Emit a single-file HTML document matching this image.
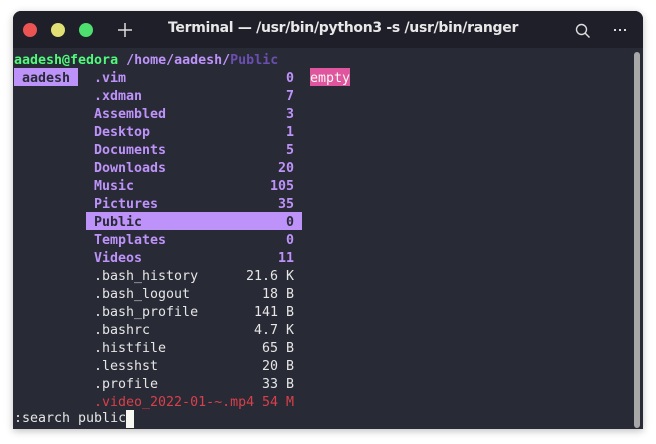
<!DOCTYPE html>
<html><head><meta charset="utf-8"><style>
html,body{margin:0;padding:0;width:656px;height:444px;background:#fff;overflow:hidden}
.win{position:absolute;left:13px;top:11px;width:630px;height:418px;background:#282a36;border-radius:8px 8px 0 0;overflow:hidden;box-shadow:0 2px 8px rgba(0,0,0,.25)}
.tb{position:absolute;left:0;top:0;width:630px;height:37px;background:#1e1f29}
.dot{position:absolute;top:12px;width:14px;height:14px;border-radius:50%}
.title{position:absolute;left:155px;width:350px;top:9px;text-align:center;color:#e8e8e8;font:bold 14px "DejaVu Sans","Liberation Sans",sans-serif;letter-spacing:-0.3px;white-space:nowrap}
.r{position:absolute;font:13.3px "DejaVu Sans Mono","Liberation Mono",monospace;line-height:18px;height:18px;white-space:pre;color:#e6e6e6;padding-top:2px;box-sizing:border-box}
.f{position:absolute;left:94px;width:200px;display:flex;justify-content:space-between;font:13.3px "DejaVu Sans Mono","Liberation Mono",monospace;line-height:18px;height:18px;white-space:pre;color:#e6e6e6;padding-top:2px;box-sizing:border-box}
.b{font-weight:bold}
.p{color:#bd93f9}
.sb{position:absolute;left:621px;top:41px;width:6px;height:376px;background:#a8a8a8;border-radius:3px}
</style></head><body>
<div class="win">
<div class="tb">
<div class="dot" style="left:10px;background:#ec5454"></div>
<div class="dot" style="left:38px;background:#e2df74"></div>
<div class="dot" style="left:66px;background:#4ee06e"></div>
<svg style="position:absolute;left:104px;top:11px" width="16" height="16"><path d="M8 1v14M1 8h14" stroke="#ddd" stroke-width="1.5"/></svg>
<div class="title">Terminal — /usr/bin/python3 -s /usr/bin/ranger</div>
<svg style="position:absolute;left:562px;top:12px" width="16" height="16"><circle cx="6.5" cy="6.5" r="5" fill="none" stroke="#ddd" stroke-width="1.4"/><path d="M10 10l4.5 4.5" stroke="#ddd" stroke-width="1.5"/></svg>
<div style="position:absolute;left:601px;top:18px;width:2px;height:2px;background:#ddd;box-shadow:5px 0 #ddd,10px 0 #ddd"></div>
</div>
<div class="sb"></div>
</div>
<div class="r b" style="left:14px;top:50px"><span style="color:#50fa7b">aadesh@fedora</span> <span class="p">/home/aadesh/</span><span style="color:#6b4fb0">Public</span></div>
<div class="r b" style="left:14px;top:68px;width:64px;background:#bd93f9;color:#282a36"> aadesh</div>
<div class="r" style="left:310px;top:68px;width:40px;background:#e0569e;color:#f8f8f2">empty</div>
<div class="r" style="left:86px;top:212px;width:216px;background:#bd93f9"></div>
<div class="f b p" style="top:68px"><span>.vim</span><span>0</span></div>
<div class="f b p" style="top:86px"><span>.xdman</span><span>7</span></div>
<div class="f b p" style="top:104px"><span>Assembled</span><span>3</span></div>
<div class="f b p" style="top:122px"><span>Desktop</span><span>1</span></div>
<div class="f b p" style="top:140px"><span>Documents</span><span>5</span></div>
<div class="f b p" style="top:158px"><span>Downloads</span><span>20</span></div>
<div class="f b p" style="top:176px"><span>Music</span><span>105</span></div>
<div class="f b p" style="top:194px"><span>Pictures</span><span>35</span></div>
<div class="f b" style="top:212px;color:#282a36"><span>Public</span><span>0</span></div>
<div class="f b p" style="top:230px"><span>Templates</span><span>0</span></div>
<div class="f b p" style="top:248px"><span>Videos</span><span>11</span></div>
<div class="f" style="top:266px"><span>.bash_history</span><span>21.6 K</span></div>
<div class="f" style="top:284px"><span>.bash_logout</span><span>18 B</span></div>
<div class="f" style="top:302px"><span>.bash_profile</span><span>141 B</span></div>
<div class="f" style="top:320px"><span>.bashrc</span><span>4.7 K</span></div>
<div class="f" style="top:338px"><span>.histfile</span><span>65 B</span></div>
<div class="f" style="top:356px"><span>.lesshst</span><span>20 B</span></div>
<div class="f" style="top:374px"><span>.profile</span><span>33 B</span></div>
<div class="f" style="top:392px;color:#d9404a"><span>.video_2022-01-~.mp4</span><span>54 M</span></div>
<div class="r" style="left:14px;top:410px;padding-top:0">:search public<span style="display:inline-block;width:8px;height:18px;background:#f8f8f2;vertical-align:top"></span></div>
<div class="r" style="left:14px;top:410px;padding-top:2px;color:transparent"> </div>
</body></html>
